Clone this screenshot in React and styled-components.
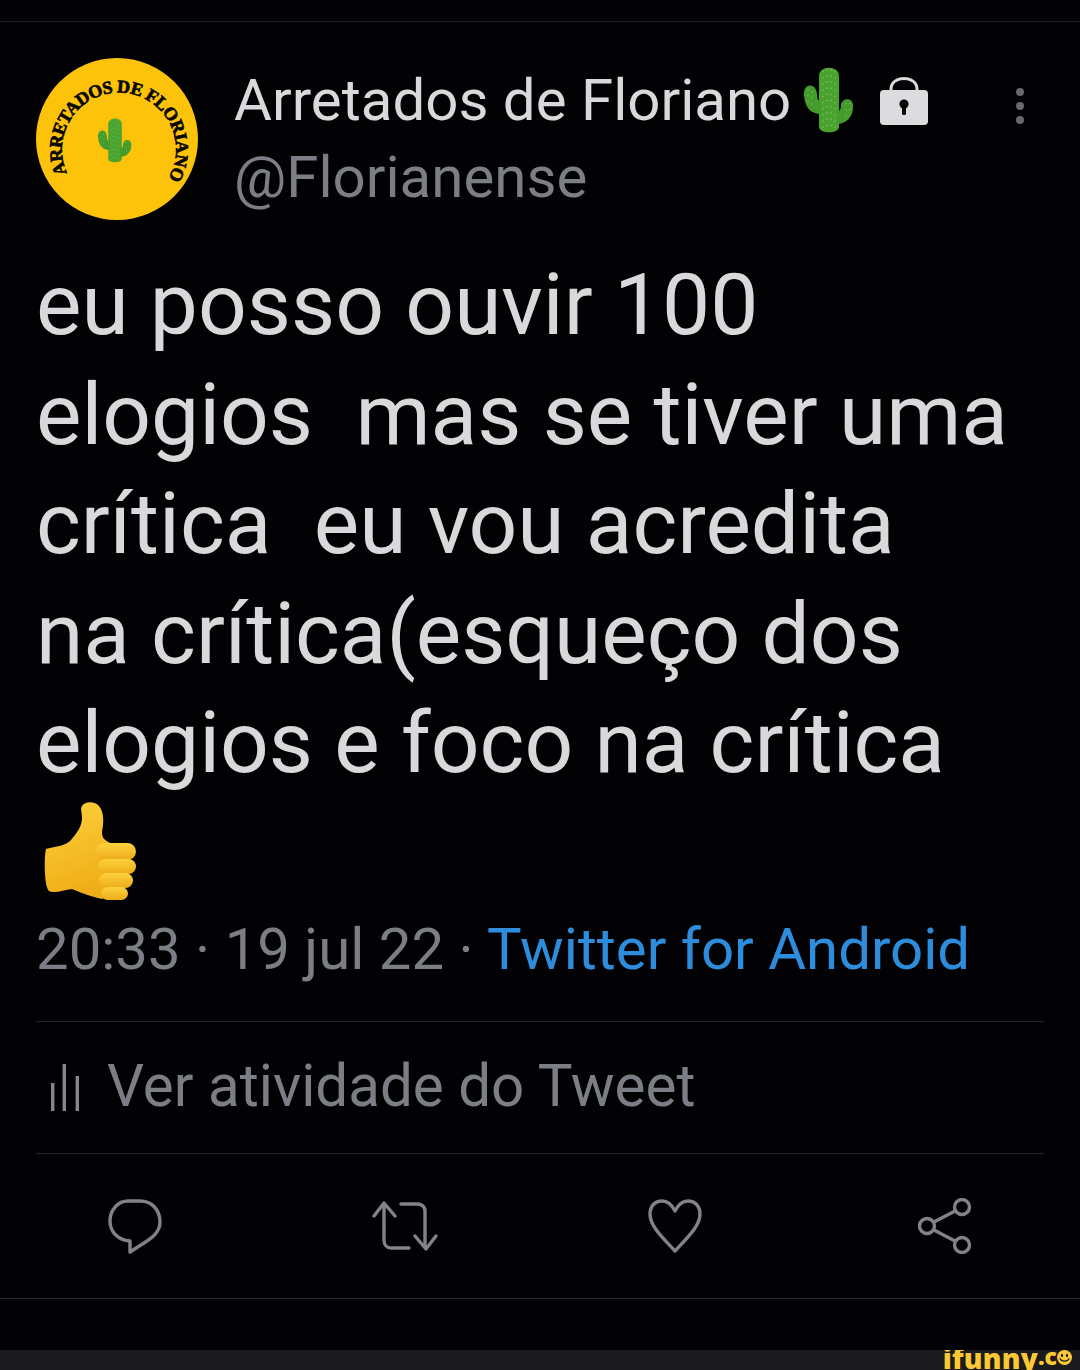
import React from "react";
import styled, { createGlobalStyle } from "styled-components";

const Global = createGlobalStyle`
  html, body { margin: 0; padding: 0; background: #020204; }
  * { box-sizing: border-box; }
`;

const Page = styled.div`
  width: 1080px;
  height: 1370px;
  background: #020204;
  font-family: Roboto, "Liberation Sans", sans-serif;
  display: flex;
  flex-direction: column;
  overflow: hidden;
  padding-top: 21px;
`;

const Tweet = styled.article`
  border-top: 1px solid #1d1e20;
  border-bottom: 1px solid #2a2b2d;
  height: 1278px;
  padding: 36px 36px 0;
  display: flex;
  flex-direction: column;
`;

const Header = styled.header`
  display: flex;
  align-items: flex-start;
  height: 162px;
`;

const Avatar = styled.svg`
  width: 162px;
  height: 162px;
  flex: none;
`;

const Names = styled.div`
  margin-left: 36px;
  flex: 1;
  display: flex;
  flex-direction: column;
`;

const NameRow = styled.div`
  display: flex;
  align-items: center;
  height: 77px;
  margin-top: 3px;
`;

const Name = styled.span`
  font-size: 58.2px;
  color: #d9d9db;
  line-height: 78px;
  white-space: pre;
`;

const Handle = styled.span`
  font-size: 58.2px;
  color: #7b7f85;
  line-height: 78px;
`;

const Cactus = styled.svg`
  width: 49px;
  height: 66px;
  margin-left: 13px;
  flex: none;
`;

const Lock = styled.svg`
  width: 48px;
  height: 48px;
  margin: 2px 0 0 27px;
  flex: none;
`;

const More = styled.svg`
  width: 10px;
  height: 40px;
  margin: 12px 0 0 87px;
  flex: none;
`;

const Body = styled.p`
  margin: 31px 0 0;
  font-size: 85.65px;
  line-height: 109.5px;
  color: #d9d9db;
  white-space: pre;
`;

const ThumbWrap = styled.div`
  height: 88px;
  margin-top: 3px;
`;

const Thumb = styled.svg`
  display: block;
  width: 92px;
  height: 100px;
  margin-left: 8px;
`;

const Meta = styled.div`
  font-size: 58.1px;
  line-height: 78px;
  color: #7b7f85;
  margin-top: 20px;
  white-space: pre;
  height: 112px;
  border-bottom: 1px solid #232426;
`;

const Source = styled.span`
  color: #2d8ddc;
`;

const Activity = styled.div`
  height: 132px;
  border-bottom: 1px solid #232426;
  display: flex;
  align-items: center;
  color: #7b7f85;
  font-size: 58.3px;
  padding-bottom: 3px;
`;

const Bars = styled.svg`
  width: 32px;
  height: 48px;
  margin: 3px 27px 0 12px;
  flex: none;
`;

const Actions = styled.div`
  flex: 1;
  display: flex;
  gap: 210px;
  align-items: center;
  padding: 0 72px;
`;

const ActionIcon = styled.svg`
  width: ${(p) => p.$w}px;
  height: 56px;
  flex: none;
  fill: none;
  stroke: #818387;
  stroke-width: 3.4;
  stroke-linecap: round;
  stroke-linejoin: round;
`;

const ShareIcon = styled(ActionIcon)`
  margin-left: 6px;
`;

const Footer = styled.footer`
  margin-top: 51px;
  flex: 1;
  background: #1b1b1d;
  display: flex;
  justify-content: flex-end;
  align-items: flex-start;
  overflow: hidden;
  padding-right: 8px;
`;

const Brand = styled.div`
  display: flex;
  align-items: baseline;
  font-family: "Open Sans", sans-serif;
  font-weight: 800;
  color: #fcc934;
  height: 20px;
  margin-top: -9px;
`;

const BrandMain = styled.span`
  font-size: 28px;
  line-height: 34px;
  letter-spacing: 0.2px;
`;

const BrandTail = styled.span`
  font-size: 23px;
  line-height: 34px;
  position: relative;
  top: -4px;
`;

const Smile = styled.svg`
  width: 15px;
  height: 15px;
  align-self: flex-start;
  margin: 9px 0 0 0;
  flex: none;
`;

function CactusPaths() {
  return (
    <>
      <path d="M15 9 C15 -2 35 -2 35 9 L35 60 C35 67 15 67 15 60 Z" fill="#4aa32f" />
      <path d="M17 47 C7 47 1 41 0 28 C-1 16 12 15 13 27 C13 31 14 34 17 35 Z" fill="#449c2c" />
      <path d="M33 57 C42 57 49 50 49 40 C50 30 38 30 37 38 C37 42 36 44 33 45 Z" fill="#449c2c" />
      <path d="M19 4 V62 M23 2 V64 M27 2 V64 M31 4 V62 M4 22 V38 M8 24 V42 M42 36 V50 M46 36 V48" stroke="#a6dc8a" strokeWidth="0.8" strokeDasharray="1.2 5" fill="none" />
    </>
  );
}

export default function App() {
  return (
    <Page>
      <Global />
      <Tweet>
        <Header>
          <Avatar viewBox="0 0 162 162">
            <circle cx="81" cy="81" r="81" fill="#fcc30a" />
            <defs>
              <path id="ring" d="M 31 115 A 57 57 0 1 1 134 117" />
            </defs>
            <text fontFamily="'Liberation Serif', serif" fontWeight="700" fontSize="18" fill="#0a0803" stroke="#0a0803" strokeWidth="0.7">
              <textPath href="#ring" textLength="233" lengthAdjust="spacing">ARRETADOS DE FLORIANO</textPath>
            </text>
            <g transform="translate(62 60) scale(0.68)">
              <CactusPaths />
            </g>
          </Avatar>
          <Names>
            <NameRow>
              <Name>Arretados de Floriano</Name>
              <Cactus viewBox="0 0 49 66"><CactusPaths /></Cactus>
              <Lock viewBox="0 0 48 48">
                <path d="M11 14 V12 C11 -2 37 -2 37 12 V14" fill="none" stroke="#dcdcde" strokeWidth="3" />
                <rect x="0" y="13" width="48" height="35" rx="4" fill="#dcdcde" />
                <circle cx="24" cy="27" r="4.6" fill="#08080a" />
                <rect x="22" y="28" width="4" height="10" rx="1.5" fill="#08080a" />
              </Lock>
              <More viewBox="0 0 10 40">
                <circle cx="5" cy="6" r="4" fill="#68696d" />
                <circle cx="5" cy="20" r="4" fill="#68696d" />
                <circle cx="5" cy="34" r="4" fill="#68696d" />
              </More>
            </NameRow>
            <Handle>@Florianense</Handle>
          </Names>
        </Header>
        <Body>{`eu posso ouvir 100
elogios  mas se tiver uma
crítica  eu vou acredita
na crítica(esqueço dos
elogios e foco na crítica`}</Body>
        <ThumbWrap>
          <Thumb viewBox="0 0 92 100">
            <defs>
              <linearGradient id="palm" x1="0" y1="0" x2="0.25" y2="1">
                <stop offset="0" stopColor="#fbd13c" />
                <stop offset="1" stopColor="#f0ae18" />
              </linearGradient>
              <linearGradient id="finger" x1="0" y1="0" x2="0" y2="1">
                <stop offset="0" stopColor="#fdd23f" />
                <stop offset="1" stopColor="#eeab18" />
              </linearGradient>
            </defs>
            <path d="M2 47 C12 44 22 44 27 38 C33 31 38 24 38 16 C38 10 36 7 38 4 C41 -1 51 -1 55 4 C60 10 60 20 58 30 C58 36 60 38 68 42 L68 92 L58 97 C44 94 36 90 28 87 C20 88 10 92 5 89 C0 85 0 55 2 47 Z" fill="url(#palm)" />
            <rect x="52" y="41" width="40" height="17" rx="8.5" fill="url(#finger)" />
            <rect x="54" y="57" width="38" height="15" rx="7.5" fill="url(#finger)" />
            <rect x="55" y="71" width="34" height="15" rx="7.5" fill="url(#finger)" />
            <rect x="57" y="85" width="27" height="13" rx="6.5" fill="url(#finger)" />
          </Thumb>
        </ThumbWrap>
        <Meta>{"20:33 · 19 jul 22 · "}<Source>Twitter for Android</Source></Meta>
        <Activity>
          <Bars viewBox="0 0 32 48" stroke="#85878a" strokeWidth="3.4">
            <path d="M4.7 48 V20 M16.3 48 V1 M29.3 48 V13" />
          </Bars>
          Ver atividade do Tweet
        </Activity>
        <Actions>
          <ActionIcon $w={54} viewBox="0 0 54 56">
            <path d="M20 3 H32 C44 3 52 12 52 24 C52 34 44 40 36 45 L22 54 V43 C10 42 2 34 2 23 C2 12 10 3 20 3 Z" />
          </ActionIcon>
          <ActionIcon $w={66} viewBox="0 0 66 56">
            <path d="M2 18 L12 5 L23 18 M12 6 V42 C12 47 15 50 19 50 H37 M29 6 H46 C50 6 53 9 53 13 V49 M43 38 L54 51 L64 38" />
          </ActionIcon>
          <ActionIcon $w={54} viewBox="0 0 54 56">
            <path d="M27 53 C14 39 2 28 2 16 C2 8 7 3 14 3 C20 3 24 7 27 13 C30 7 34 3 40 3 C47 3 52 8 52 16 C52 28 40 39 27 53 Z" />
          </ActionIcon>
          <ShareIcon $w={54} viewBox="0 0 54 56">
            <circle cx="44" cy="9" r="7.5" />
            <circle cx="9" cy="28" r="7.5" />
            <circle cx="44" cy="47" r="7.5" />
            <path d="M16 24 L37 13 M16 32 L37 43" />
          </ShareIcon>
        </Actions>
      </Tweet>
      <Footer>
        <Brand>
          <BrandMain>ifunny</BrandMain>
          <BrandTail>.c</BrandTail>
          <Smile viewBox="0 0 15 15">
            <circle cx="7.5" cy="7.5" r="7.5" fill="#fcc934" />
            <ellipse cx="5" cy="5.5" rx="1.1" ry="1.7" fill="#1b1b1d" />
            <ellipse cx="10" cy="5.5" rx="1.1" ry="1.7" fill="#1b1b1d" />
            <path d="M3 8.8 C4.5 12 10.5 12 12 8.8" fill="none" stroke="#1b1b1d" strokeWidth="1.2" strokeLinecap="round" />
          </Smile>
        </Brand>
      </Footer>
    </Page>
  );
}
